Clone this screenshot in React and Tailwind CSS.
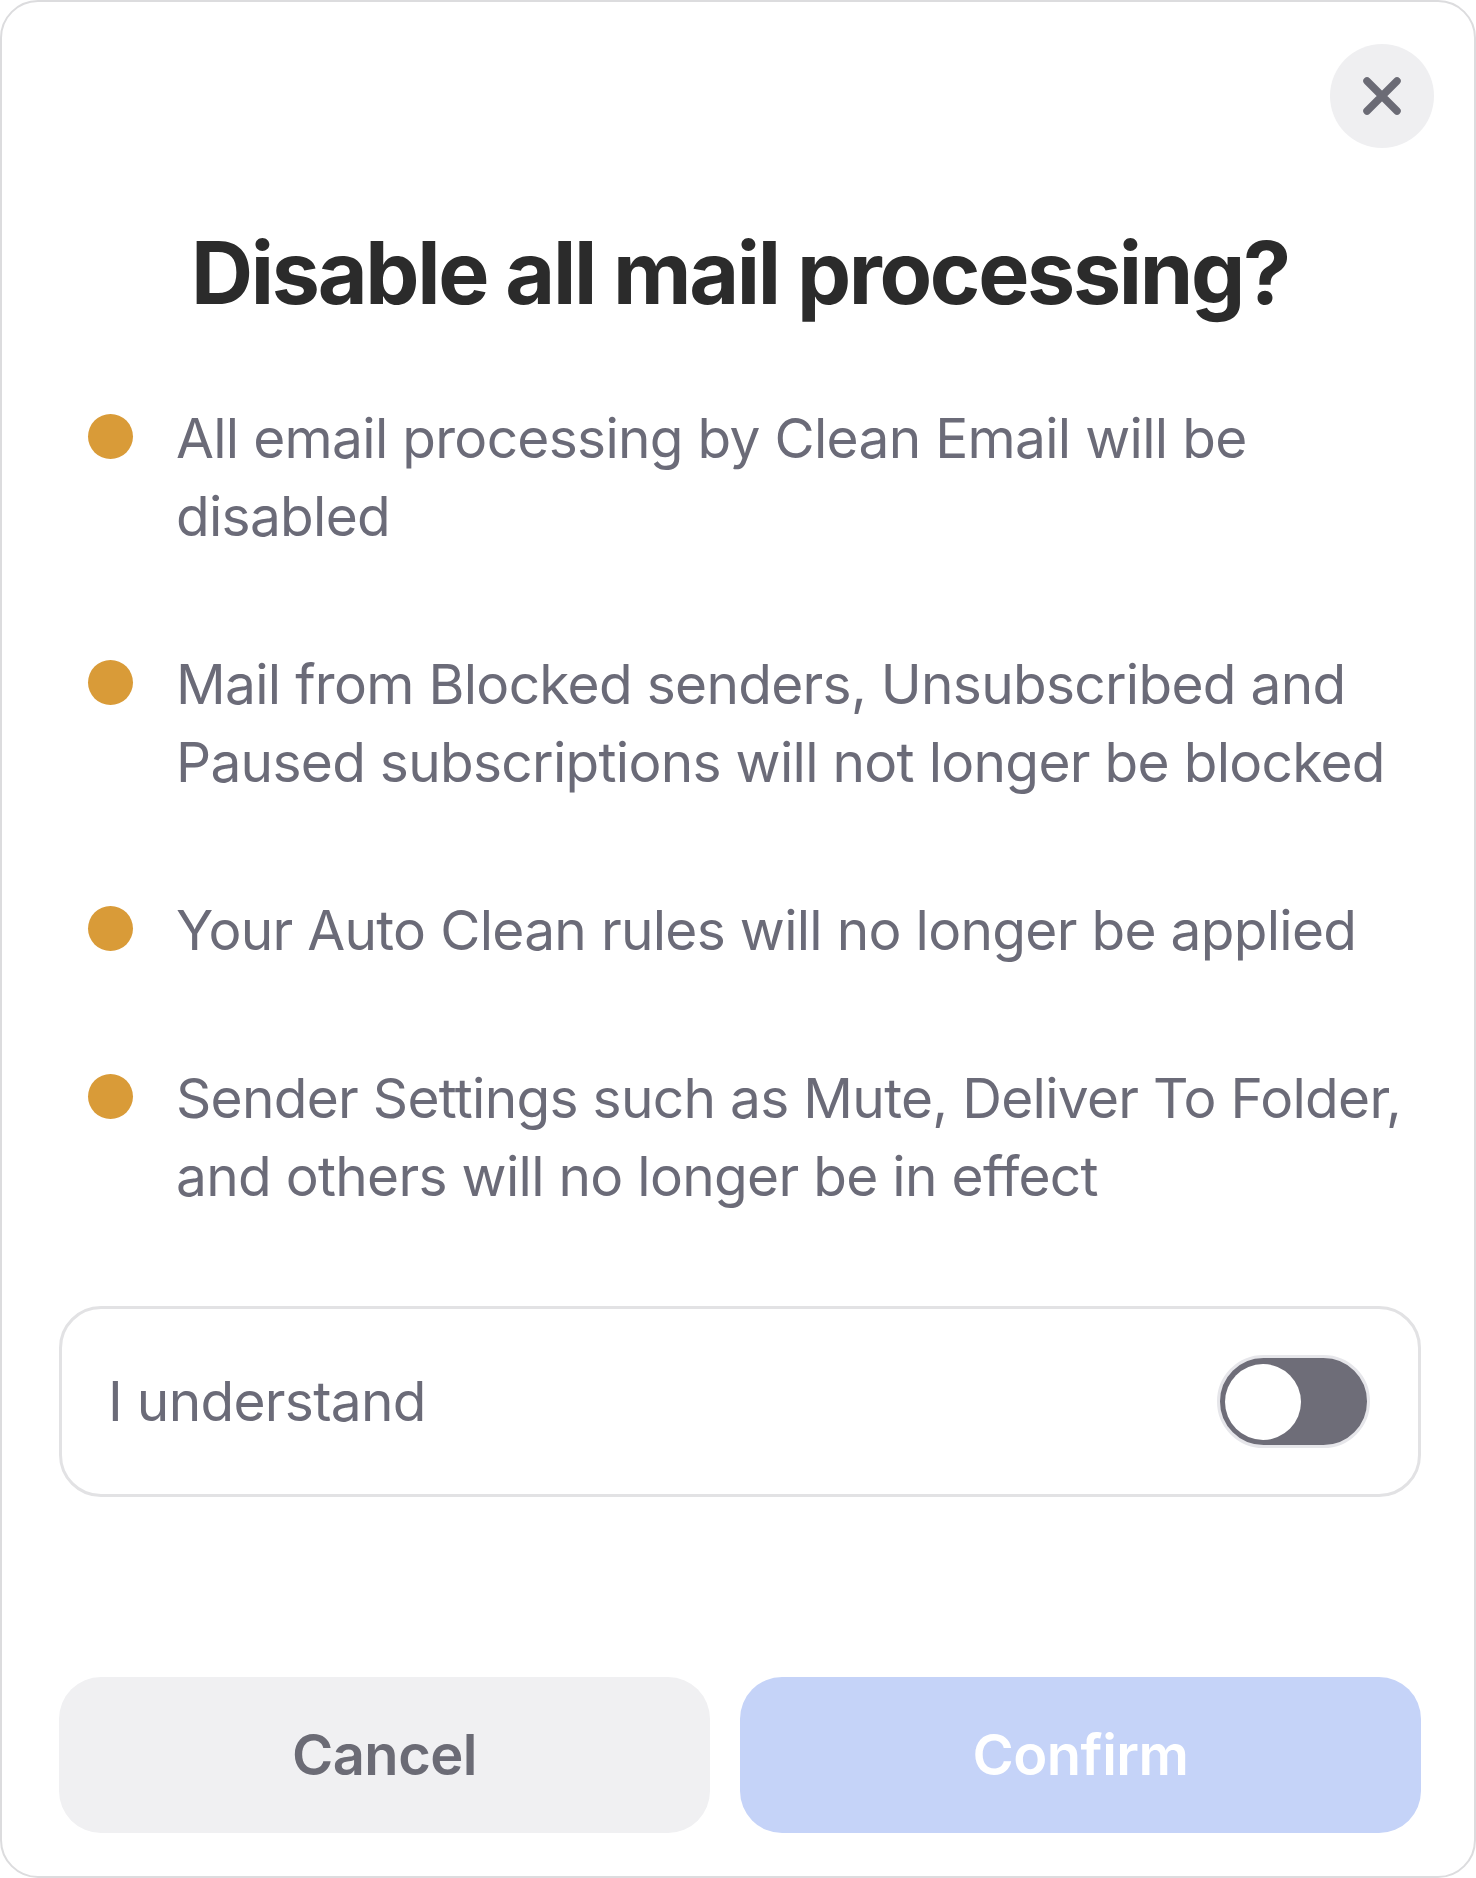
import React, { useState } from 'react';

const items = [
  'All email processing by Clean Email will be disabled',
  'Mail from Blocked senders, Unsubscribed and Paused subscriptions will not longer be blocked',
  'Your Auto Clean rules will no longer be applied',
  'Sender Settings such as Mute, Deliver To Folder, and others will no longer be in effect',
];

export default function App() {
  const [agreed, setAgreed] = useState(false);

  return (
    <div className="w-[1476px] h-[1878px] bg-white font-['Inter',sans-serif]">
      <div className="relative flex h-full flex-col rounded-[38px] border-2 border-[#dcdcde] pl-[57px] pr-[53px] pb-[43px]">
        {/* close */}
        <button className="absolute right-[40px] top-[42px] flex h-[104px] w-[104px] items-center justify-center rounded-full bg-[#efeff1]">
          <svg width="40" height="40" viewBox="0 0 40 40">
            <path d="M5 5 L35 35 M35 5 L5 35" stroke="#6b6b75" strokeWidth="7.5" strokeLinecap="round" />
          </svg>
        </button>

        <h1 className="mt-[221px] text-center text-[86px] font-bold leading-[100px] tracking-[-2.3px] text-[#2b2b2b]">
          Disable all mail processing?
        </h1>

        {/* list */}
        <ul className="mt-[76px] -mr-[20px] flex flex-col gap-[90px] pl-[29px]">
          {items.map((t) => (
            <li key={t} className="flex items-start gap-[43px]">
              <span className="mt-[15px] h-[45px] w-[45px] shrink-0 rounded-full bg-[#d99b38]" />
              <p className="text-[55px] leading-[78px] tracking-[-0.7px] text-[#6b6b78]">{t}</p>
            </li>
          ))}
        </ul>

        {/* confirm toggle */}
        <div className="mt-[91px] flex h-[191px] items-center justify-between rounded-[42px] border-[3px] border-[#e2e2e4] pl-[46px] pr-[48px]">
          <span className="text-[55px] tracking-[-0.7px] text-[#6b6b78]">I understand</span>
          <button
            onClick={() => setAgreed(!agreed)}
            className={`flex h-[93px] w-[153px] shrink-0 items-center rounded-full border-[3px] border-[#e6e6ea] p-[5px] ${agreed ? 'justify-end bg-[#4f6df5]' : 'justify-start bg-[#6e6d78]'}`}
          >
            <span className="h-[76px] w-[76px] rounded-full bg-white" />
          </button>
        </div>

        {/* actions */}
        <div className="mt-auto flex gap-[30px]">
          <button className="h-[156px] w-[651px] rounded-[42px] bg-[#f0f0f2] text-[56px] font-semibold tracking-[-0.5px] text-[#6b6b75]">
            Cancel
          </button>
          <button className="h-[156px] flex-1 rounded-[42px] bg-[#c5d3f8] text-[56px] font-semibold tracking-[-0.5px] text-white">
            Confirm
          </button>
        </div>
      </div>
    </div>
  );
}
